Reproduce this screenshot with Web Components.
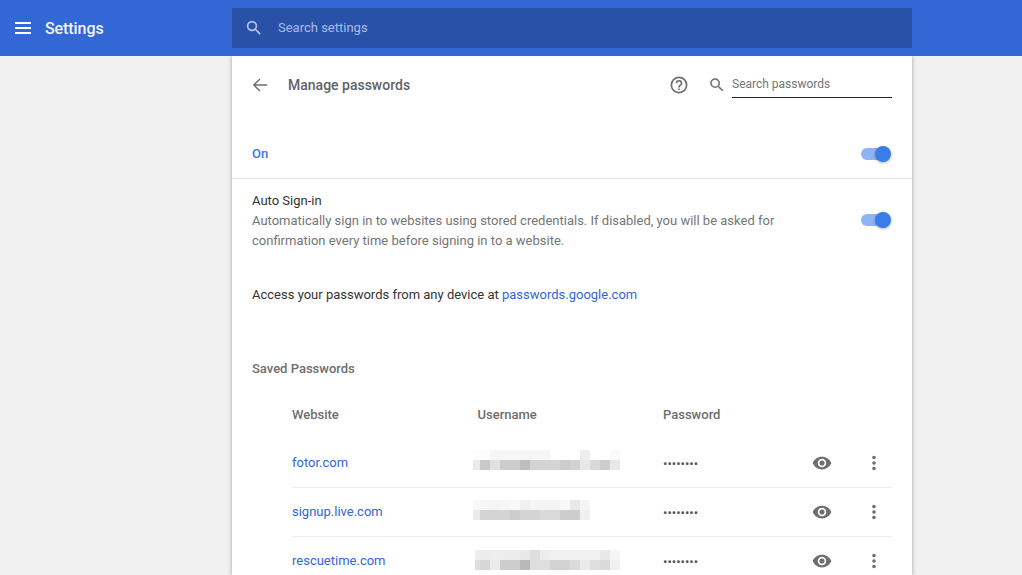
<!DOCTYPE html>
<html><head><meta charset="utf-8"><title>Settings</title>
<style>
html,body{margin:0;height:575px;overflow:hidden;background:#f1f1f1;font-family:Roboto,"Liberation Sans",sans-serif;font-size:13px;color:#333}
</style></head><body>
<settings-app></settings-app>
<script>
const eye=`<svg width="24" height="24" viewBox="0 0 24 24" fill="#6e6e6e"><path d="M12 4.5C7 4.5 2.73 7.61 1 12c1.73 4.39 6 7.5 11 7.5s9.27-3.11 11-7.5c-1.73-4.39-6-7.5-11-7.5zM12 17a5 5 0 1 1 0-10 5 5 0 0 1 0 10zm0-8a3 3 0 1 0 0 6 3 3 0 0 0 0-6z" transform="translate(1.8 1.8) scale(.85)"/></svg>`;
const dots=`<svg width="24" height="24" viewBox="0 0 24 24" fill="#6e6e6e"><circle cx="12" cy="6.5" r="1.8"/><circle cx="12" cy="12" r="1.8"/><circle cx="12" cy="17.5" r="1.8"/></svg>`;
const searchPath="M15.5 14h-.79l-.28-.27A6.47 6.47 0 0 0 16 9.5 6.5 6.5 0 1 0 9.5 16c1.61 0 3.09-.59 4.23-1.57l.27.28v.79l5 4.99L20.49 19l-4.99-5zm-6 0C7.01 14 5 11.99 5 9.5S7.01 5 9.5 5 14 7.01 14 9.5 11.99 14 9.5 14z";

class AppHeader extends HTMLElement{constructor(){super();this.attachShadow({mode:"open"}).innerHTML=`<style>
:host{display:flex;align-items:center;height:56px;background:#3367d6;color:#fff;box-sizing:border-box}
.left{width:232px;display:flex;align-items:center;flex:none;padding-left:11px;box-sizing:border-box}
.title{font-size:16px;font-weight:500;margin-left:10px;color:#f1f5fd;padding-top:1px;letter-spacing:-.08px}
svg{display:block}
.box{width:680px;height:40px;background:#2a51a8;display:flex;align-items:center;box-sizing:border-box;padding:0 0 1px 10px}
.ph{font-size:13px;color:#a9bde8;margin-left:12px;font-weight:400}
</style><div class="left"><svg width="24" height="24" viewBox="0 0 24 24" fill="#fff"><path d="M4 6h16v2H4zM4 11h16v2H4zM4 16h16v2H4z"/></svg><span class="title">Settings</span></div>
<div class="box"><svg width="24" height="24" viewBox="0 0 24 24" fill="#b4c6ec" style="transform:scale(.8)"><path d="${searchPath}"/></svg><span class="ph">Search settings</span></div>`}}
customElements.define("app-header",AppHeader);

class ToggleSwitch extends HTMLElement{constructor(){super();this.attachShadow({mode:"open"}).innerHTML=`<style>
:host{display:block;position:relative;width:30px;height:16px;flex:none}
.t{position:absolute;left:0;top:2px;width:28px;height:12px;border-radius:6px;background:#8fb3f5}
.k{position:absolute;right:0;top:0;width:16px;height:16px;border-radius:50%;background:#3b7de8;box-shadow:0 1px 3px rgba(0,0,0,.3)}
</style><div class="t"></div><div class="k"></div>`}}
customElements.define("toggle-switch",ToggleSwitch);

class PixelBlur extends HTMLElement{constructor(){super();this.attachShadow({mode:"open"})}
connectedCallback(){const rows=JSON.parse(this.getAttribute("rows"));const f=+(this.getAttribute("first")||7);const up=this.getAttribute("up")||0;
this.shadowRoot.innerHTML=`<style>:host{display:block;width:150px;margin:0 0 ${up}px ${7-f}px}
.r{display:flex;height:10px}.r i{display:block;width:10px;height:10px;flex:none}.r i:first-child{width:${f}px}</style>`+rows.map(r=>`<div class="r">${r.map(v=>`<i style="background:rgb(${v},${v},${v})"></i>`).join("")}</div>`).join("")}}
customElements.define("pixel-blur",PixelBlur);

class PasswordRow extends HTMLElement{constructor(){super();this.attachShadow({mode:"open"})}
connectedCallback(){const last=this.hasAttribute("last");
this.shadowRoot.innerHTML=`<style>
:host{display:flex;height:${last?48:49}px;align-items:center;box-sizing:border-box;${last?"":"border-bottom:1px solid #ececec;"}margin-left:60px;margin-right:20px}
.site{width:181px;flex:none;color:#3367d6;font-size:13px}
.user{width:190px;flex:none}
.pw{flex:1;font-size:13px;color:#555;padding-top:1px}
.e{margin-right:28px;display:flex}.d{margin-right:6px;display:flex}
</style><span class="site"><slot></slot></span><div class="user"><slot name="user"></slot></div><span class="pw">••••••••</span><span class="e">${eye}</span><span class="d">${dots}</span>`}}
customElements.define("password-row",PasswordRow);

class SettingsCard extends HTMLElement{constructor(){super();this.attachShadow({mode:"open"}).innerHTML=`<style>
:host{display:block;width:680px;margin-left:232px;height:519px;overflow:hidden;background:#fff;box-shadow:0 0 4px rgba(0,0,0,.35);clip-path:inset(0 -8px -8px -8px);color:#333;font-size:13px;line-height:20px}
svg{display:block}
.head{display:flex;align-items:center;height:58px;padding:0 20px 0 16px}
.ttl{font-size:14px;font-weight:500;color:#5f6368;margin-left:16px}
.sp{flex:1}
.srch{display:flex;align-items:center;margin-left:17px}
.inp{width:160px;height:26px;border-bottom:1px solid #222;color:#757575;font-size:12px;line-height:24px;box-sizing:border-box}
.on{display:flex;align-items:center;justify-content:space-between;height:65px;padding:15px 21px 0 20px;border-bottom:1px solid #e6e6e6;box-sizing:border-box;color:#3b78e7;font-weight:500;font-size:13px}
.auto{display:flex;align-items:center;justify-content:space-between;padding:12px 21px 0 20px}
.auto toggle-switch{margin-bottom:2px}
.auto .h{color:#333}.auto .s{color:#757575}
.access{padding:34px 20px 0}
a{color:#3367d6;text-decoration:none}
.saved{padding:54px 20px 0;font-weight:500;color:#6e6e6e;font-size:13px}
.cols{display:flex;margin:26px 0 0 60px;font-weight:500;color:#6e6e6e;font-size:13px;height:34px}
.cols span{width:185.5px}
</style>
<div class="head"><svg width="24" height="24" viewBox="0 0 24 24" fill="#6e6e6e"><path d="M20 11.2H7.1l5.4-5.4L11.4 4.7 4 12l7.4 7.3 1.1-1.1-5.4-5.4H20z" transform="translate(1.2 1.2) scale(.9)"/></svg><span class="ttl">Manage passwords</span><span class="sp"></span>
<svg width="24" height="24" viewBox="0 0 24 24" fill="#6e6e6e"><path d="M11 18h2v-2h-2v2zm1-16a10 10 0 1 0 0 20 10 10 0 0 0 0-20zm0 18a8 8 0 1 1 0-16 8 8 0 0 1 0 16zm0-14a4 4 0 0 0-4 4h2a2 2 0 1 1 4 0c0 2-3 1.75-3 5h2c0-2.25 3-2.5 3-5a4 4 0 0 0-4-4z" transform="translate(1.8 1.8) scale(.85)"/></svg>
<div class="srch"><svg width="18" height="18" viewBox="0 0 24 24" fill="#6e6e6e" style="margin-right:6px"><path d="${searchPath}"/></svg><div class="inp">Search passwords</div></div></div>
<div class="on"><span>On</span><toggle-switch></toggle-switch></div>
<div class="auto"><div><div class="h">Auto Sign-in</div><div class="s">Automatically sign in to websites using stored credentials. If disabled, you will be asked for<br>confirmation every time before signing in to a website.</div></div><toggle-switch></toggle-switch></div>
<div class="access">Access your passwords from any device at <a>passwords.google.com</a></div>
<div class="saved">Saved Passwords</div>
<div class="cols"><span>Website</span><span>Username</span><span>Password</span></div>
<slot></slot>`}}
customElements.define("settings-card",SettingsCard);

class SettingsApp extends HTMLElement{constructor(){super();this.attachShadow({mode:"open"}).innerHTML=`<style>:host{display:block;width:1022px;height:575px;overflow:hidden}</style>
<app-header></app-header>
<settings-card>
<password-row>fotor.com<pixel-blur slot="user" up="6" rows="[[253,253,246,246,246,246,246,246,255,255,255,238,255,255,250],[235,200,225,205,205,190,212,212,212,205,210,232,218,205,232]]"></pixel-blur></password-row>
<password-row>signup.live.com<pixel-blur slot="user" up="4" rows="[[248,246,245,246,248,240,245,245,245,248,232,245,255,255,255],[235,212,212,212,205,212,212,218,218,205,205,240,255,255,255]]"></pixel-blur></password-row>
<password-row last>rescuetime.com<pixel-blur slot="user" up="2" first="5" rows="[[238,236,238,236,236,232,222,236,240,240,240,240,240,232,245],[222,215,235,205,205,185,222,222,210,210,218,235,222,218,240]]"></pixel-blur></password-row>
</settings-card>`}}
customElements.define("settings-app",SettingsApp);
</script></body></html>
